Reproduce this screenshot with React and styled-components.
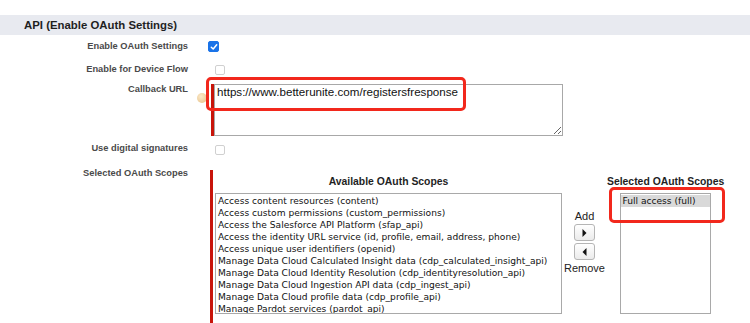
import React from 'react';
import styled, { createGlobalStyle } from 'styled-components';

const Global = createGlobalStyle`
  html, body { margin: 0; padding: 0; background: #fff; }
  body { font-family: "Liberation Sans", Arial, sans-serif; }
`;

const Page = styled.div`
  width: 750px;
  height: 323px;
  overflow: hidden;
  padding-top: 15px;
  box-sizing: border-box;
  background: #fff;
`;

const SectionHeader = styled.h3`
  margin: 0;
  height: 20px;
  line-height: 20px;
  background: #e8eaf0;
  padding-left: 24px;
  font-size: 11.4px;
  font-weight: bold;
  color: #1f1f1f;
`;

const FormRow = styled.div`
  display: flex;
  align-items: flex-start;
  height: ${p => p.$h}px;
`;

const Label = styled.div`
  width: 188px;
  flex: none;
  text-align: right;
  font-size: 9.3px;
  line-height: 14px;
  font-weight: bold;
  color: #4a4a4a;
  padding-top: ${p => p.$pt}px;
`;

const Field = styled.div`
  flex: 1;
  margin-left: 8px;
  display: flex;
  align-items: flex-start;
  padding-top: ${p => p.$pt || 0}px;
  padding-left: ${p => p.$pl || 0}px;
`;

const Box = styled.span`
  display: inline-flex;
  align-items: center;
  justify-content: center;
  width: ${p => (p.$checked ? 11 : 10)}px;
  height: ${p => (p.$checked ? 11 : 10)}px;
  border-radius: 2px;
  box-sizing: border-box;
  background: ${p => (p.$checked ? '#1a73e8' : '#fff')};
  border: 1px solid ${p => (p.$checked ? '#1a73e8' : '#d0d0d0')};
`;

const Checkbox = ({ checked }) => (
  <Box $checked={checked}>
    {checked && (
      <svg width="8" height="8" viewBox="0 0 8 8">
        <path d="M1.3 4.2 L3.2 6 L6.7 1.8" fill="none" stroke="#fff" strokeWidth="1.5" strokeLinecap="round" strokeLinejoin="round" />
      </svg>
    )}
  </Box>
);

const HelpIcon = styled.span`
  width: 10px;
  height: 10px;
  border-radius: 50%;
  margin: 9px 4px 0 1px;
  background: radial-gradient(circle at 40% 35%, #fbe9c8, #e6bf85);
  flex: none;
`;

const Annotated = styled.div`
  position: relative;
  display: flex;
`;

const Highlight = styled.div`
  position: absolute;
  left: ${p => p.$l}px;
  top: ${p => p.$t}px;
  width: ${p => p.$w}px;
  height: ${p => p.$hh}px;
  border: 3px solid #f2281c;
  border-radius: 5px;
  box-sizing: border-box;
  pointer-events: none;
`;

const RequiredBar = styled.div`
  width: 3px;
  height: 52px;
  background: #c8140a;
  flex: none;
`;

const UrlArea = styled.textarea`
  width: 349px;
  height: 52px;
  box-sizing: border-box;
  margin: 0;
  border: 1px solid #a8a8a8;
  padding: 0 2px;
  font-family: "Liberation Sans", Arial, sans-serif;
  font-size: 11.6px;
  line-height: 14px;
  color: #111;
  outline: none;
  resize: both;
`;

const ScopesBlock = styled.div`
  border-left: 3px solid #c8140a;
  padding-left: 2px;
  height: 160px;
  display: flex;
  align-items: flex-start;
`;

const Column = styled.div`
  width: ${p => p.$w}px;
  flex: none;
  padding-top: 5px;
  position: relative;
`;

const ColTitle = styled.div`
  text-align: center;
  font-size: 10.4px;
  line-height: 14px;
  font-weight: bold;
  color: #1f1f1f;
  margin-bottom: 4px;
  white-space: nowrap;
`;

const ListBox = styled.div`
  width: ${p => p.$w}px;
  height: 121px;
  margin: 0 auto;
  box-sizing: border-box;
  border: 1px solid #a9a9a9;
  padding: 1px 0;
  overflow: hidden;
  background: #fff;
`;

const Option = styled.div`
  font-family: "DejaVu Sans", "Liberation Sans", sans-serif;
  font-size: 9.1px;
  line-height: 12px;
  height: 12px;
  padding-left: 2px;
  color: #111;
  white-space: nowrap;
  background: ${p => (p.$selected ? '#d9d9d9' : 'transparent')};
`;

const MiddleCol = styled.div`
  width: 45px;
  flex: none;
  padding-top: 39px;
  display: flex;
  flex-direction: column;
  align-items: center;
`;

const MoveLabel = styled.div`
  font-size: 11px;
  line-height: 14px;
  color: #222;
`;

const ArrowButton = styled.button`
  width: 21px;
  height: 17px;
  margin: ${p => p.$m};
  padding: 0;
  border: 1px solid #b5b5b5;
  border-radius: 3px;
  background: linear-gradient(#ffffff, #ebebeb);
  display: flex;
  align-items: center;
  justify-content: center;
`;

const Arrow = ({ dir }) => (
  <svg width="5" height="8" viewBox="0 0 5 8">
    {dir === 'right' ? <path d="M0.5 0 L4.5 4 L0.5 8 Z" fill="#111" /> : <path d="M4.5 0 L0.5 4 L4.5 8 Z" fill="#111" />}
  </svg>
);

const available = [
  'Access content resources (content)',
  'Access custom permissions (custom_permissions)',
  'Access the Salesforce API Platform (sfap_api)',
  'Access the identity URL service (id, profile, email, address, phone)',
  'Access unique user identifiers (openid)',
  'Manage Data Cloud Calculated Insight data (cdp_calculated_insight_api)',
  'Manage Data Cloud Identity Resolution (cdp_identityresolution_api)',
  'Manage Data Cloud Ingestion API data (cdp_ingest_api)',
  'Manage Data Cloud profile data (cdp_profile_api)',
  'Manage Pardot services (pardot_api)',
];

export default function App() {
  return (
    <Page>
      <Global />
      <SectionHeader>API (Enable OAuth Settings)</SectionHeader>

      <FormRow $h={23}>
        <Label $pt={4}>Enable OAuth Settings</Label>
        <Field $pt={6} $pl={12}><Checkbox checked /></Field>
      </FormRow>

      <FormRow $h={19}>
        <Label $pt={4}>Enable for Device Flow</Label>
        <Field $pt={7} $pl={19}><Checkbox /></Field>
      </FormRow>

      <FormRow $h={63}>
        <Label $pt={5}>Callback URL</Label>
        <Field $pt={7}>
          <HelpIcon />
          <Annotated>
            <RequiredBar />
            <UrlArea readOnly value="https://www.betterunite.com/registersfresponse" />
            <Highlight $l={-5} $t={-7} $w={260} $hh={34} />
          </Annotated>
        </Field>
      </FormRow>

      <FormRow $h={25}>
        <Label $pt={1}>Use digital signatures</Label>
        <Field $pt={5} $pl={19}><Checkbox /></Field>
      </FormRow>

      <FormRow $h={160}>
        <Label $pt={1}>Selected OAuth Scopes</Label>
        <Field $pt={5} $pl={14}>
          <ScopesBlock>
            <Column $w={347}>
              <ColTitle>Available OAuth Scopes</ColTitle>
              <ListBox $w={347}>
                {available.map(s => <Option key={s}>{s}</Option>)}
              </ListBox>
            </Column>
            <MiddleCol>
              <MoveLabel>Add</MoveLabel>
              <ArrowButton $m="1px 0 0"><Arrow dir="right" /></ArrowButton>
              <ArrowButton $m="2px 0 1px"><Arrow dir="left" /></ArrowButton>
              <MoveLabel>Remove</MoveLabel>
            </MiddleCol>
            <Column $w={116}>
              <ColTitle>Selected OAuth Scopes</ColTitle>
              <ListBox $w={91}>
                <Option $selected>Full access (full)</Option>
              </ListBox>
              <Highlight $l={2} $t={17} $w={116} $hh={36} />
            </Column>
          </ScopesBlock>
        </Field>
      </FormRow>
    </Page>
  );
}
